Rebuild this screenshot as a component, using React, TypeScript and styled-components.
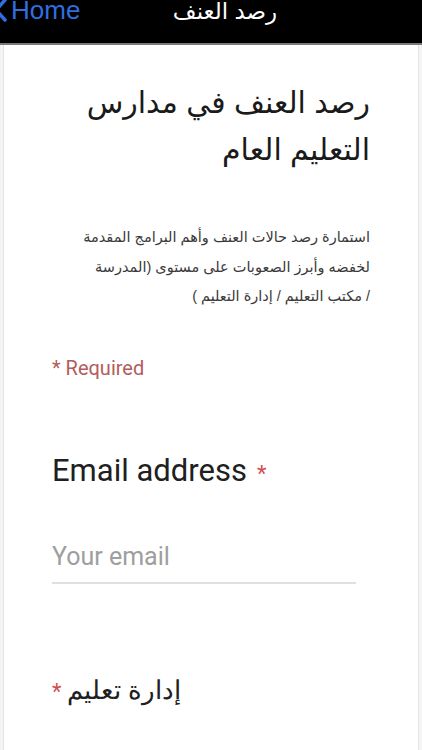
import { type FC } from 'react';
import styled, { createGlobalStyle } from 'styled-components';

const GlobalStyle = createGlobalStyle`
  html, body {
    margin: 0;
    padding: 0;
    background: #f4f4f4;
  }
  body {
    font-family: Roboto, "Liberation Sans", sans-serif;
    overflow: hidden;
  }
`;

const Screen = styled.div`
  width: 422px;
  height: 750px;
  display: flex;
  flex-direction: column;
  overflow: hidden;
`;

const TopBar = styled.div`
  height: 43px;
  flex-shrink: 0;
  background: #000;
  border-bottom: 2px solid #7a7a7a;
  display: flex;
  align-items: flex-start;
  position: relative;
  overflow: hidden;
`;

const BackLink = styled.a`
  display: flex;
  align-items: center;
  gap: 4px;
  margin-top: -10px;
  margin-left: -7px;
  color: #2f6fe0;
  font-family: "Liberation Sans", Arial, sans-serif;
  font-size: 26px;
  text-decoration: none;
  line-height: 40px;
`;

const BarTitle = styled.div`
  position: absolute;
  left: 0;
  right: 0;
  top: -9px;
  text-align: center;
  padding-left: 28px;
  color: #fff;
  font-family: "Liberation Sans", "DejaVu Sans", sans-serif;
  font-size: 23px;
  line-height: 40px;
  direction: rtl;
`;

const Card = styled.main`
  flex: 1;
  margin: 0 3px;
  background: #fff;
  border-left: 1px solid #e4e4e4;
  border-right: 1px solid #e4e4e4;
  padding: 34px 48px 0 48px;
  display: flex;
  flex-direction: column;
`;

const FormTitle = styled.h1`
  margin: 0;
  direction: rtl;
  text-align: right;
  font-family: "Liberation Sans", "DejaVu Sans", sans-serif;
  font-weight: normal;
  font-size: 30px;
  line-height: 47px;
  color: #1a1a1a;
`;

const FormDesc = styled.p`
  margin: 50px 0 0 0;
  direction: rtl;
  text-align: right;
  font-family: "Liberation Sans", "DejaVu Sans", sans-serif;
  font-size: 14.5px;
  line-height: 29.5px;
  color: #3a3a3a;
`;

const RequiredNote = styled.div`
  margin-top: 44px;
  font-size: 20px;
  color: #b35c5c;
  line-height: 24px;
`;

const Question = styled.section<{ $gap: number }>`
  margin-top: ${(p) => p.$gap}px;
  display: flex;
  flex-direction: column;
`;

const QuestionLabel = styled.div<{ $rtl?: boolean }>`
  display: flex;
  flex-direction: ${(p) => (p.$rtl ? 'row-reverse' : 'row')};
  justify-content: ${(p) => (p.$rtl ? 'flex-end' : 'flex-start')};
  align-items: baseline;
  gap: ${(p) => (p.$rtl ? '6px' : '10px')};
  font-size: ${(p) => (p.$rtl ? '26px' : '31px')};
  font-family: ${(p) =>
    p.$rtl ? '"Liberation Serif", "DejaVu Serif", serif' : 'Roboto, sans-serif'};
  color: #202020;
  line-height: 36px;
`;

const LabelText = styled.span<{ $rtl?: boolean }>`
  direction: ${(p) => (p.$rtl ? 'rtl' : 'ltr')};
`;

const Star = styled.span`
  color: #d05050;
  font-family: Roboto, sans-serif;
  font-size: 22px;
`;

const EmailInput = styled.div`
  margin-top: 50px;
  width: 304px;
  border-bottom: 2px solid #e0e0e0;
  padding-bottom: 10px;
  font-size: 25px;
  line-height: 30px;
  color: #9e9e9e;
`;

const Chevron: FC = () => (
  <svg width="14" height="24" viewBox="0 0 14 24" fill="none">
    <path d="M12 2 L3 12 L12 22" stroke="#2f6fe0" strokeWidth="3.5" strokeLinecap="round" strokeLinejoin="round" />
  </svg>
);

export default function App() {
  return (
    <>
      <GlobalStyle />
      <Screen>
        <TopBar>
          <BackLink href="#">
            <Chevron />
            Home
          </BackLink>
          <BarTitle>رصد العنف</BarTitle>
        </TopBar>
        <Card>
          <FormTitle>رصد العنف في مدارس التعليم العام</FormTitle>
          <FormDesc>
            استمارة رصد حالات العنف وأهم البرامج المقدمة
            <br />
            لخفضه وأبرز الصعوبات على مستوى (المدرسة
            <br />
            / مكتب التعليم / إدارة التعليم )
          </FormDesc>
          <RequiredNote>* Required</RequiredNote>
          <Question $gap={73}>
            <QuestionLabel>
              <LabelText>Email address</LabelText>
              <Star>*</Star>
            </QuestionLabel>
            <EmailInput>Your email</EmailInput>
          </Question>
          <Question $gap={89}>
            <QuestionLabel $rtl>
              <LabelText $rtl>إدارة تعليم</LabelText>
              <Star>*</Star>
            </QuestionLabel>
          </Question>
        </Card>
      </Screen>
    </>
  );
}
